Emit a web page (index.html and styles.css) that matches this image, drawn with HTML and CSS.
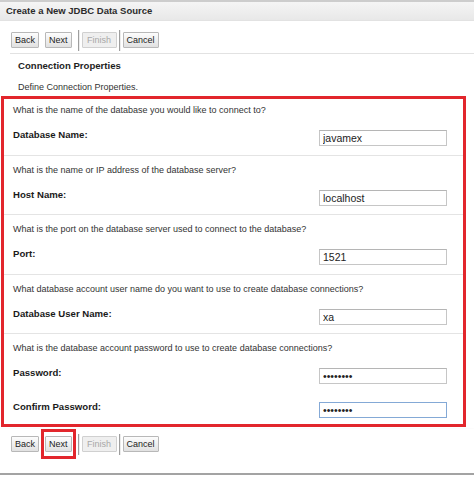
FILE: index.html
```html
<!DOCTYPE html>
<html lang="en">
<head>
    <meta charset="UTF-8">
    <meta name="viewport" content="width=device-width, initial-scale=1.0">
    <title>Create a New JDBC Data Source</title>
    <link rel="stylesheet" href="styles.css">
</head>
<body>
    <div class="titlebar">Create a New JDBC Data Source</div>

    <div class="toolbar">
        <button class="btn">Back</button>
        <span class="btn-wrap"><button class="btn">Next</button></span>
        <span class="sep"></span>
        <button class="btn" disabled>Finish</button>
        <span class="sep"></span>
        <button class="btn">Cancel</button>
    </div>

    <div class="intro">
        <h2>Connection Properties</h2>
        <p>Define Connection Properties.</p>
    </div>

    <div class="form">
        <div class="group">
            <p class="question">What is the name of the database you would like to connect to?</p>
            <div class="field">
                <label>Database Name:</label>
                <input type="text" value="javamex">
            </div>
        </div>
        <div class="group">
            <p class="question">What is the name or IP address of the database server?</p>
            <div class="field">
                <label>Host Name:</label>
                <input type="text" value="localhost">
            </div>
        </div>
        <div class="group">
            <p class="question">What is the port on the database server used to connect to the database?</p>
            <div class="field">
                <label>Port:</label>
                <input type="text" value="1521">
            </div>
        </div>
        <div class="group">
            <p class="question">What database account user name do you want to use to create database connections?</p>
            <div class="field">
                <label>Database User Name:</label>
                <input type="text" value="xa">
            </div>
        </div>
        <div class="group last">
            <p class="question">What is the database account password to use to create database connections?</p>
            <div class="field">
                <label>Password:</label>
                <input type="password" value="xxxxxxxx">
            </div>
            <div class="field">
                <label>Confirm Password:</label>
                <input type="password" class="focused" value="xxxxxxxx">
            </div>
        </div>
    </div>

    <div class="toolbar bottom">
        <button class="btn">Back</button>
        <span class="btn-wrap marked"><button class="btn">Next</button></span>
        <span class="sep"></span>
        <button class="btn" disabled>Finish</button>
        <span class="sep"></span>
        <button class="btn">Cancel</button>
    </div>
</body>
</html>
```

FILE: styles.css
```css
body {
    margin: 0;
    font-family: "Liberation Sans", Arial, sans-serif;
    font-size: 9px;
    color: #333;
    background-color: #fff;
}
.titlebar {
    height: 18px;
    line-height: 18px;
    padding-left: 6px;
    border-top: 2px solid #cdcdcd;
    border-bottom: 1px solid #e2e2e2;
    background: linear-gradient(#f5f5f5, #e8e8e8);
    font-weight: bold;
    font-size: 9.5px;
    color: #2b2b2b;
}
.toolbar {
    display: flex;
    align-items: center;
    gap: 2px;
    height: 22px;
    padding: 8px 0 0 11px;
}
.toolbar.bottom {
    height: 30px;
    margin-top: 2px;
    padding: 0 0 14px 11px;
    border-bottom: 2px solid #a3a3a3;
    box-shadow: 0 1px 2px #d0d0d0;
}
.btn {
    height: 16px;
    padding: 0 3px;
    border: 1px solid #b8b8b8;
    border-radius: 1px;
    background: linear-gradient(#fdfdfd, #e1e1e1);
    font-family: "Liberation Sans", Arial, sans-serif;
    font-size: 9px;
    line-height: 14px;
    color: #222;
}
.btn:disabled {
    padding: 0 4.5px;
    color: #a8a8a8;
    background: #efefef;
    border-color: #d0d0d0;
}
.btn-wrap {
    display: flex;
    padding: 4px 1px;
    border: 3px solid transparent;
}
.btn-wrap.marked {
    border-color: #e2262c;
}
.sep {
    width: 1px;
    height: 21px;
    background-color: #9e9e9e;
    border-right: 1px solid #ececec;
}
.intro {
    margin: 2px 0 0 10px;
    padding-left: 8px;
    border-top: 1px solid #e2e2e2;
}
.intro h2 {
    margin: 0;
    padding-top: 6px;
    line-height: 12px;
    font-size: 9.6px;
    color: #1e1e1e;
}
.intro p {
    margin: 9px 0 0;
    line-height: 12px;
}
.form {
    width: 465px;
    box-sizing: border-box;
    margin: 3px 0 0 1px;
    border: 3px solid #e2262c;
}
.group {
    padding: 8px 0 8.5px 9px;
    border-top: 1px solid #e4e4e4;
}
.group:first-child {
    padding-top: 5px;
    border-top: none;
}
.group.last {
    padding-bottom: 6px;
}
.question {
    margin: 0;
    line-height: 12px;
}
.field {
    display: grid;
    grid-template-columns: 306px 128px;
    align-items: start;
    margin-top: 14px;
}
.field + .field {
    margin-top: 18px;
}
.field label {
    margin-top: -1px;
    line-height: 12px;
    font-weight: bold;
    font-size: 9.6px;
    color: #1a1a1a;
}
.field input {
    height: 16px;
    box-sizing: border-box;
    margin: 0;
    padding: 0 3px;
    border: 1px solid #c6c6c6;
    border-top-color: #b5b5b5;
    font-family: "Liberation Sans", Arial, sans-serif;
    font-size: 10.5px;
    color: #222;
    outline: none;
}
.field input.focused {
    border-color: #84a9d6;
}
```
